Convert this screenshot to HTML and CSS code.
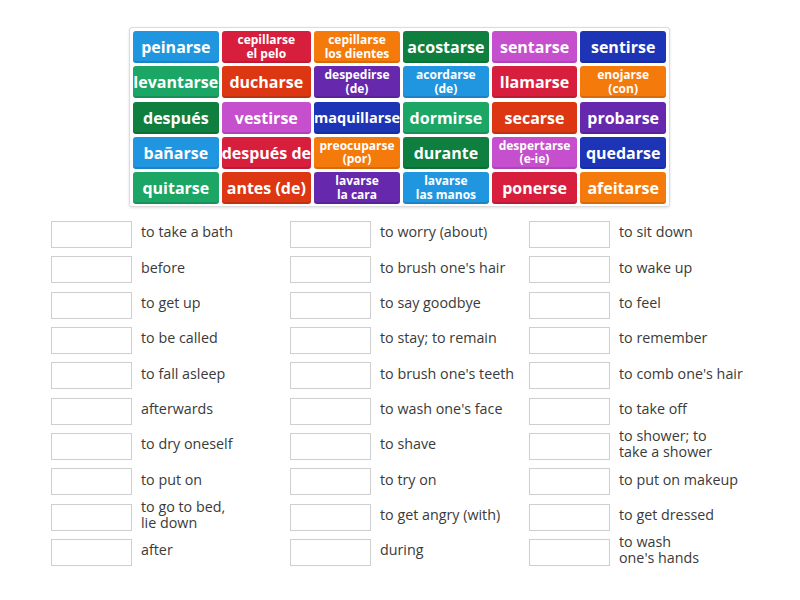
FILE: index.html
```html
<!DOCTYPE html>
<html>
<head>
<meta charset="utf-8">
<link rel="stylesheet" href="styles.css">
</head>
<body>
<div class="board">
  <div class="tile c1">peinarse</div>
  <div class="tile c2 two">cepillarse<br>el pelo</div>
  <div class="tile c3 two">cepillarse<br>los dientes</div>
  <div class="tile c4">acostarse</div>
  <div class="tile c5">sentarse</div>
  <div class="tile c6">sentirse</div>

  <div class="tile c7">levantarse</div>
  <div class="tile c8">ducharse</div>
  <div class="tile c9 two">despedirse<br>(de)</div>
  <div class="tile c1 two">acordarse<br>(de)</div>
  <div class="tile c2">llamarse</div>
  <div class="tile c3 two">enojarse<br>(con)</div>

  <div class="tile c4">después</div>
  <div class="tile c5">vestirse</div>
  <div class="tile c6 mid">maquillarse</div>
  <div class="tile c7">dormirse</div>
  <div class="tile c8">secarse</div>
  <div class="tile c9">probarse</div>

  <div class="tile c1">bañarse</div>
  <div class="tile c2">después de</div>
  <div class="tile c3 two">preocuparse<br>(por)</div>
  <div class="tile c4">durante</div>
  <div class="tile c5 two">despertarse<br>(e-ie)</div>
  <div class="tile c6">quedarse</div>

  <div class="tile c7">quitarse</div>
  <div class="tile c8">antes (de)</div>
  <div class="tile c9 two">lavarse<br>la cara</div>
  <div class="tile c1 two">lavarse<br>las manos</div>
  <div class="tile c2">ponerse</div>
  <div class="tile c3">afeitarse</div>
</div>

<div class="list">
  <div class="item"><div class="box"></div><div class="label">to take a bath</div></div>
  <div class="item"><div class="box"></div><div class="label">to worry (about)</div></div>
  <div class="item"><div class="box"></div><div class="label">to sit down</div></div>

  <div class="item"><div class="box"></div><div class="label">before</div></div>
  <div class="item"><div class="box"></div><div class="label">to brush one's hair</div></div>
  <div class="item"><div class="box"></div><div class="label">to wake up</div></div>

  <div class="item"><div class="box"></div><div class="label">to get up</div></div>
  <div class="item"><div class="box"></div><div class="label">to say goodbye</div></div>
  <div class="item"><div class="box"></div><div class="label">to feel</div></div>

  <div class="item"><div class="box"></div><div class="label">to be called</div></div>
  <div class="item"><div class="box"></div><div class="label">to stay; to remain</div></div>
  <div class="item"><div class="box"></div><div class="label">to remember</div></div>

  <div class="item"><div class="box"></div><div class="label">to fall asleep</div></div>
  <div class="item"><div class="box"></div><div class="label">to brush one's teeth</div></div>
  <div class="item"><div class="box"></div><div class="label">to comb one's hair</div></div>

  <div class="item"><div class="box"></div><div class="label">afterwards</div></div>
  <div class="item"><div class="box"></div><div class="label">to wash one's face</div></div>
  <div class="item"><div class="box"></div><div class="label">to take off</div></div>

  <div class="item"><div class="box"></div><div class="label">to dry oneself</div></div>
  <div class="item"><div class="box"></div><div class="label">to shave</div></div>
  <div class="item"><div class="box"></div><div class="label">to shower; to<br>take a shower</div></div>

  <div class="item"><div class="box"></div><div class="label">to put on</div></div>
  <div class="item"><div class="box"></div><div class="label">to try on</div></div>
  <div class="item"><div class="box"></div><div class="label">to put on makeup</div></div>

  <div class="item"><div class="box"></div><div class="label">to go to bed,<br>lie down</div></div>
  <div class="item"><div class="box"></div><div class="label">to get angry (with)</div></div>
  <div class="item"><div class="box"></div><div class="label">to get dressed</div></div>

  <div class="item"><div class="box"></div><div class="label">after</div></div>
  <div class="item"><div class="box"></div><div class="label">during</div></div>
  <div class="item"><div class="box"></div><div class="label">to wash<br>one's hands</div></div>
</div>
</body>
</html>
```

FILE: styles.css
```css
html, body {
  margin: 0;
  padding: 0;
  background: #ffffff;
}

body {
  font-family: "Open Sans", "Liberation Sans", sans-serif;
  width: 800px;
  height: 600px;
  overflow: hidden;
}

.board {
  box-sizing: border-box;
  width: 541px;
  height: 180px;
  margin: 27px 0 0 129px;
  padding: 3px;
  border: 1px solid #dcdcdc;
  border-radius: 3px;
  box-shadow: 0 1px 3px rgba(0, 0, 0, 0.12);
  display: grid;
  grid-template-columns: repeat(6, 1fr);
  grid-auto-rows: 32px;
  gap: 3.3px 3px;
  background: #fff;
}

.tile {
  border-radius: 3px;
  color: #ffffff;
  font-weight: 700;
  font-size: 16px;
  line-height: 18px;
  display: flex;
  align-items: center;
  justify-content: center;
  text-align: center;
  white-space: nowrap;
  box-shadow: inset 0 -2px 0 rgba(0, 0, 0, 0.12);
}

.tile.two {
  font-size: 12px;
  line-height: 13.5px;
  padding-bottom: 1px;
}

.tile.mid {
  font-size: 14.5px;
}

.c1 { background: #2196e0; }
.c2 { background: #d81e3d; }
.c3 { background: #f57a0c; }
.c4 { background: #0e7f3e; }
.c5 { background: #c54fcd; }
.c6 { background: #1c34b5; }
.c7 { background: #1ba666; }
.c8 { background: #dc3712; }
.c9 { background: #6628ad; }

.list {
  margin: 14px 0 0 51px;
  display: grid;
  grid-template-columns: repeat(3, 239px);
  grid-auto-rows: 27px;
  row-gap: 8.33px;
}

.item {
  display: flex;
  align-items: center;
}

.box {
  box-sizing: border-box;
  width: 81px;
  height: 27px;
  border: 1px solid #cfcfcf;
  flex: none;
}

.label {
  margin-left: 9px;
  padding-bottom: 5px;
  font-size: 14.3px;
  line-height: 15.5px;
  color: #3a3a3a;
  white-space: nowrap;
}
```
